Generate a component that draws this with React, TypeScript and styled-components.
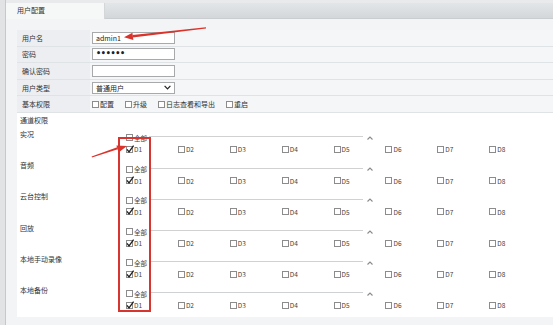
import React from 'react';
import styled, { createGlobalStyle } from 'styled-components';

const GlobalStyle = createGlobalStyle`
  html, body {
    margin: 0;
    padding: 0;
    background: #f1f2f3;
  }
  body {
    font-family: "Noto Sans CJK SC", "Noto Sans", sans-serif;
    color: #333;
  }
`;

const Screen = styled.div`
  position: relative;
  width: 553px;
  height: 325px;
  display: flex;
  overflow: hidden;
  background: #f1f2f3;
`;

const SideRail = styled.div`
  width: 5px;
  background: #e2e3e4;
  border-right: 1px solid #c6c8ca;
`;

const Main = styled.div`
  flex: 1;
  display: flex;
  flex-direction: column;
  background: #e9eaeb;
`;

const TabBar = styled.div`
  margin-top: 3px;
  height: 15px;
  display: flex;
  background: linear-gradient(#e3e6e8, #d3d7da);
  border-bottom: 1px solid #c9cdd0;
`;

const Tab = styled.div`
  width: 87px;
  height: 16px;
  padding-left: 11px;
  background: #f6f7f7;
  border-right: 1px solid #d4d7da;
  font-size: 7px;
  line-height: 15px;
  color: #333;
`;

const Content = styled.div`
  flex: 1;
  display: flex;
  padding: 11px 0 13px 11px;
  background: #f3f4f5;
`;

const Card = styled.div`
  flex: 1;
  display: flex;
  flex-direction: column;
  background: #fff;
`;

const Table = styled.div`
  display: flex;
  flex-direction: column;
`;

const Row = styled.div`
  display: grid;
  grid-template-columns: 73px 1fr;
  height: 16.6px;
  box-sizing: border-box;
  border-bottom: 1px solid #e0e3e6;
`;

const Label = styled.div`
  background: #eceef1;
  padding-left: 5px;
  font-size: 7px;
  display: flex;
  align-items: center;
  color: #333;
`;

const Value = styled.div`
  background: #f5f6f8;
  padding-left: 2px;
  display: flex;
  align-items: center;
`;

const Field = styled.div`
  width: 83px;
  height: 12px;
  box-sizing: border-box;
  border: 1px solid #a7a9ab;
  background: #fff;
  display: flex;
  align-items: center;
  justify-content: space-between;
  padding: 0 3px;
  font-size: 7px;
  color: #222;
`;

const Dots = styled.span`
  font-size: 8px;
  line-height: 8px;
  font-weight: bold;
  letter-spacing: -0.3px;
  font-family: "DejaVu Sans", sans-serif;
`;

const Options = styled.div`
  display: flex;
  gap: 11px;
`;

const Opt = styled.label`
  display: flex;
  align-items: center;
  gap: 1px;
  font-size: 7px;
  color: #333;
`;

const BoxWrap = styled.span`
  position: relative;
  width: 7px;
  height: 7px;
  box-sizing: border-box;
  border: 1px solid #8c8c8c;
  background: #fff;
  flex-shrink: 0;

  > svg {
    position: absolute;
    left: -1px;
    top: -2px;
    overflow: visible;
  }
`;

const Check = ({ checked }: { checked?: boolean }) => (
  <BoxWrap>
    {checked && (
      <svg width="8" height="8" viewBox="0 0 8 8">
        <path d="M1 4.4 L3 7 L7.6 0.6" fill="none" stroke="#1f1f1f" strokeWidth="1.3" />
      </svg>
    )}
  </BoxWrap>
);

const ChannelArea = styled.div`
  padding: 3px 0 0 3px;
  display: flex;
  flex-direction: column;
`;

const Heading = styled.div`
  font-size: 7px;
  line-height: 9px;
  height: 9px;
  margin-bottom: 5px;
`;

const Section = styled.div`
  display: grid;
  grid-template-columns: 106px 1fr;
  height: 31.2px;
`;

const SectionLabel = styled.div`
  font-size: 7px;
  line-height: 9px;
`;

const SectionBody = styled.div`
  padding-top: 4px;
  display: flex;
  flex-direction: column;
  gap: 2.5px;
`;

const HeadRow = styled.div`
  display: flex;
  align-items: center;
  height: 8px;
`;

const Rule = styled.div`
  width: 214px;
  height: 1px;
  background: #cfd1d3;
  margin: 0 4px 2px 2px;
  align-self: center;
`;

const Channels = styled.div`
  display: grid;
  grid-template-columns: repeat(8, 51.9px);
  height: 8px;
`;

const Chan = styled.label`
  display: flex;
  align-items: center;
  gap: 1px;
  font-size: 6.5px;
  color: #444;
`;

const RedFrame = styled.div`
  position: absolute;
  left: 118px;
  top: 137px;
  width: 33px;
  height: 175px;
  box-sizing: border-box;
  border: 2px solid #d6362f;
  pointer-events: none;
`;

const Overlay = styled.svg`
  position: absolute;
  left: 0;
  top: 0;
  pointer-events: none;
`;

const sections = ['实况', '音频', '云台控制', '回放', '本地手动录像', '本地备份'];
const channels = ['D1', 'D2', 'D3', 'D4', 'D5', 'D6', 'D7', 'D8'];

export default function App() {
  return (
    <>
      <GlobalStyle />
      <Screen>
        <SideRail />
        <Main>
          <TabBar>
            <Tab>用户配置</Tab>
          </TabBar>
          <Content>
            <Card>
              <Table>
                <Row>
                  <Label>用户名</Label>
                  <Value><Field>admin1</Field></Value>
                </Row>
                <Row>
                  <Label>密码</Label>
                  <Value><Field><Dots>••••••</Dots></Field></Value>
                </Row>
                <Row>
                  <Label>确认密码</Label>
                  <Value><Field /></Value>
                </Row>
                <Row>
                  <Label>用户类型</Label>
                  <Value>
                    <Field>
                      普通用户
                      <svg width="7" height="5" viewBox="0 0 7 5">
                        <path d="M0.6 0.8 L3.5 3.8 L6.4 0.8" fill="none" stroke="#222" strokeWidth="1.2" />
                      </svg>
                    </Field>
                  </Value>
                </Row>
                <Row>
                  <Label>基本权限</Label>
                  <Value>
                    <Options>
                      <Opt><Check />配置</Opt>
                      <Opt><Check />升级</Opt>
                      <Opt><Check />日志查看和导出</Opt>
                      <Opt><Check />重启</Opt>
                    </Options>
                  </Value>
                </Row>
              </Table>
              <ChannelArea>
                <Heading>通道权限</Heading>
                {sections.map((name) => (
                  <Section key={name}>
                    <SectionLabel>{name}</SectionLabel>
                    <SectionBody>
                      <HeadRow>
                        <Chan><Check />全部</Chan>
                        <Rule />
                        <svg width="6" height="4" viewBox="0 0 6 4">
                          <path d="M0.5 3.5 L3 1 L5.5 3.5" fill="none" stroke="#8a8a8a" strokeWidth="1.1" />
                        </svg>
                      </HeadRow>
                      <Channels>
                        {channels.map((c, i) => (
                          <Chan key={c}><Check checked={i === 0} />{c}</Chan>
                        ))}
                      </Channels>
                    </SectionBody>
                  </Section>
                ))}
              </ChannelArea>
            </Card>
          </Content>
        </Main>
        <RedFrame />
        <Overlay width="553" height="325" viewBox="0 0 553 325">
          <polygon points="206,27.2 206,28.4 132.7,37.5 132.5,35" fill="#d9342c" />
          <polygon points="124,37.3 133.3,39.9 132.4,32.7" fill="#d9342c" />
          <polygon points="92,157.6 91.6,156.6 117.2,147.3 117.8,149.3" fill="#d9342c" />
          <polygon points="127,146 118.6,152.4 116.4,145.6" fill="#d9342c" />
        </Overlay>
      </Screen>
    </>
  );
}
